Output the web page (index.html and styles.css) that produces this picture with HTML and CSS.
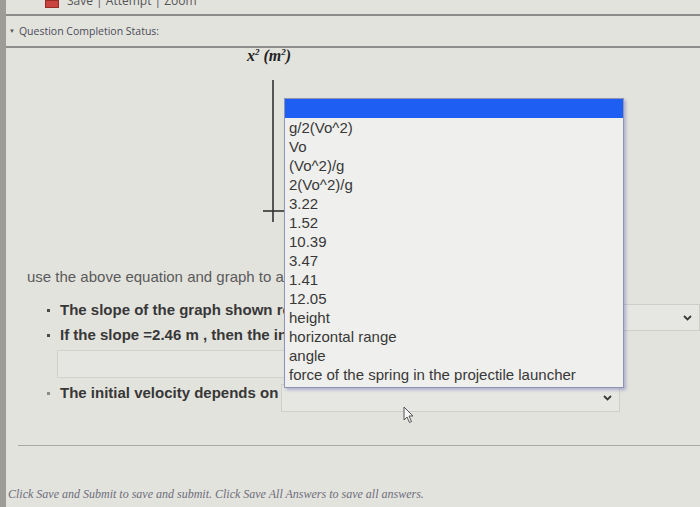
FILE: index.html
```html
<!DOCTYPE html>
<html>
<head>
<meta charset="utf-8">
<link rel="stylesheet" href="styles.css">
</head>
<body>
<div class="page">
  <div class="topbar">
    <span class="tb-icon"></span><span class="tb-text">Save | Attempt | Zoom</span>
  </div>
  <div class="status"><span class="tri">&#9660;</span>Question Completion Status:</div>
  <div class="question">
    <div class="title">x<sup>2</sup> (m<sup>2</sup>)</div>
    <svg class="graph" width="30" height="160" viewBox="0 0 30 160">
      <line x1="10" y1="16" x2="10" y2="158" stroke="#333" stroke-width="1.6"/>
      <line x1="0" y1="147" x2="22" y2="147" stroke="#333" stroke-width="1.6"/>
    </svg>
    <p class="intro">use the above equation and graph to answer the following</p>
    <ul class="items">
      <li class="row1">
        <span class="q">The slope of the graph shown represents</span>
        <span class="select sel1"><svg class="chev" width="9" height="6" viewBox="0 0 9 6"><path d="M1 1 L4.5 4.5 L8 1" fill="none" stroke="#3a3a3a" stroke-width="1.8"/></svg></span>
      </li>
      <li class="row2">
        <span class="q">If the slope =2.46 m , then the initial velocity is</span>
      </li>
      <li class="boxrow"><span class="box"></span></li>
      <li class="row3">
        <span class="q light">The initial velocity depends on</span>
        <span class="select sel2"><svg class="chev" width="9" height="6" viewBox="0 0 9 6"><path d="M1 1 L4.5 4.5 L8 1" fill="none" stroke="#3a3a3a" stroke-width="1.8"/></svg></span>
      </li>
    </ul>
  </div>
  <div class="rule"></div>
  <p class="footer">Click Save and Submit to save and submit. Click Save All Answers to save all answers.</p>
</div>

<div class="dropdown">
  <div class="dd-head"></div>
  <ul class="dd-list">
    <li>g/2(Vo^2)</li>
    <li>Vo</li>
    <li>(Vo^2)/g</li>
    <li>2(Vo^2)/g</li>
    <li>3.22</li>
    <li>1.52</li>
    <li>10.39</li>
    <li>3.47</li>
    <li>1.41</li>
    <li>12.05</li>
    <li>height</li>
    <li>horizontal range</li>
    <li>angle</li>
    <li>force of the spring in the projectile launcher</li>
  </ul>
</div>

<svg class="cursor" width="12" height="18" viewBox="0 0 12 18">
  <path d="M1 1 L1 14 L4 11 L6.5 16.5 L8.5 15.5 L6 10 L10 10 Z" fill="#f4f4f4" stroke="#555" stroke-width="1" stroke-linejoin="round"/>
</svg>
</body>
</html>
```

FILE: styles.css
```css
html, body {
  margin: 0;
  padding: 0;
}
body {
  width: 700px;
  height: 507px;
  overflow: hidden;
  position: relative;
  background: #e3e3de;
  font-family: "Liberation Sans", Arial, sans-serif;
}
.page {
  border-left: 6px solid #9d9d96;
  height: 507px;
  box-sizing: border-box;
}
.topbar {
  height: 14px;
  overflow: hidden;
  border-bottom: 2px solid #8c8c8a;
  display: flex;
  align-items: flex-start;
}
.tb-icon {
  display: inline-block;
  width: 12px;
  height: 6px;
  margin-left: 39px;
  background: #c8443c;
  border: 1px solid #9a2a25;
}
.tb-text {
  font-family: "Open Sans", sans-serif;
  font-size: 12px;
  line-height: 12px;
  margin-top: -5px;
  margin-left: 8px;
  color: #555;
}
.status {
  height: 30px;
  line-height: 30px;
  border-bottom: 2px solid #8e8e8c;
  font-family: "Open Sans", sans-serif;
  font-size: 10.5px;
  color: #4b4b58;
  padding-left: 3px;
}
.tri {
  font-size: 6px;
  vertical-align: 2px;
  margin-right: 4px;
  color: #555;
}
.title {
  font-family: "Liberation Serif", serif;
  font-weight: bold;
  font-style: italic;
  font-size: 16px;
  line-height: 16px;
  height: 16px;
  padding-left: 241px;
  color: #222;
}
.title sup {
  font-size: 9px;
  line-height: 0;
  vertical-align: 6px;
}
.graph {
  display: block;
  margin-left: 257px;
}
.intro {
  margin: 43px 0 0 21px;
  font-size: 15px;
  line-height: 20px;
  color: #5a5a5a;
  white-space: nowrap;
}
.items {
  list-style: none;
  margin: 13px 0 0 0;
  padding: 0 0 0 41px;
}
.items li {
  display: flex;
  align-items: flex-start;
  white-space: nowrap;
}
.q {
  font-weight: bold;
  font-size: 15px;
  line-height: 20px;
  color: #373737;
  position: relative;
  padding-left: 13px;
}
.q::before {
  content: "";
  position: absolute;
  left: 0;
  top: 9px;
  width: 3px;
  height: 3px;
  background: #4a4a4a;
}
.q.light::before {
  background: #8a8a8a;
}
.select {
  box-sizing: border-box;
  border: 1px solid #cfcfca;
  background: #e6e6e2;
  display: flex;
  align-items: center;
  justify-content: flex-end;
  padding-right: 7px;
}
.sel1 {
  width: 350px;
  height: 27px;
  margin-top: 4px;
  margin-bottom: -6px;
  margin-left: 6px;
}
.sel2 {
  width: 339px;
  height: 28px;
  margin-top: 1px;
  margin-left: 3px;
}
.row3 {
  margin-top: 5px;
}
.boxrow {
  margin-top: 5px;
}
.box {
  display: block;
  margin-left: 10px;
  width: 330px;
  height: 28px;
  box-sizing: border-box;
  border: 1px solid #d2d2cd;
  background: #e5e5e1;
}
.rule {
  margin: 33px 0 0 12px;
  height: 1px;
  background: #a9a9a6;
}
.footer {
  margin: 40px 0 0 2px;
  font-family: "Liberation Serif", serif;
  font-style: italic;
  font-size: 12px;
  line-height: 16px;
  color: #6d6d7a;
  white-space: nowrap;
}
.dropdown {
  position: absolute;
  left: 284px;
  top: 98px;
  width: 340px;
  height: 290px;
  box-sizing: border-box;
  background: #efefed;
  border: 1px solid #8f93b3;
  box-shadow: 2px 2px 3px rgba(70, 80, 170, 0.35);
}
.dd-head {
  height: 19px;
  background: #1e5ef2;
}
.dd-list {
  list-style: none;
  margin: 0;
  padding: 0 0 0 4px;
}
.dd-list li {
  font-size: 15px;
  line-height: 19px;
  height: 19px;
  color: #383838;
  white-space: nowrap;
}
.cursor {
  position: absolute;
  left: 403px;
  top: 406px;
}
```
